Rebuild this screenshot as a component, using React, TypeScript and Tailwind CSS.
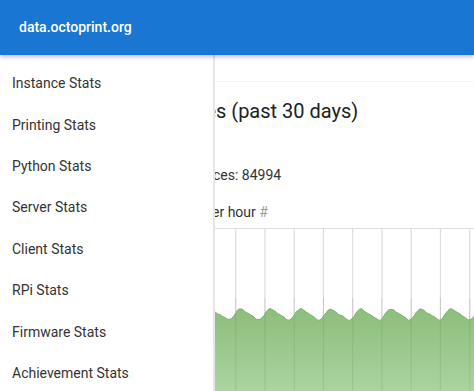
import React from "react";

const items = [
  "Instance Stats",
  "Printing Stats",
  "Python Stats",
  "Server Stats",
  "Client Stats",
  "RPi Stats",
  "Firmware Stats",
  "Achievement Stats",
];

function buildWave() {
  const pts: string[] = [];
  let seed = 7;
  const rnd = () => {
    seed = (seed * 9301 + 49297) % 233280;
    return seed / 233280;
  };
  for (let x = 0; x <= 480; x += 2) {
    const t = ((x - 242) / 30.1) * 2 * Math.PI;
    const y =
      314.5 - 5 * Math.cos(t) + 1.3 * Math.sin(2 * t) + (rnd() - 0.5) * 1.2;
    pts.push(`${x},${(y - 228).toFixed(2)}`);
  }
  return pts;
}

function Chart() {
  const pts = buildWave();
  const area = `M0,200 L${pts.join(" L")} L480,200 Z`;
  const line = `M${pts.join(" L")}`;
  const grids: number[] = [];
  for (let k = -8; k <= 9; k++) grids.push(235.7 + 29.25 * k);
  return (
    <svg width="474" height="170" className="block" viewBox="0 0 474 170">
      <defs>
        <linearGradient id="g" x1="0" y1="80" x2="0" y2="165" gradientUnits="userSpaceOnUse">
          <stop offset="0" stopColor="#8cbe7c" />
          <stop offset="1" stopColor="#acd49f" />
        </linearGradient>
      </defs>
      <line x1="0" y1="0.5" x2="474" y2="0.5" stroke="#e0e0e0" strokeWidth="1" />
      {grids.map((gx) => (
        <line key={gx} x1={gx} y1="0" x2={gx} y2="170" stroke="#dcdcdc" strokeWidth="1.2" />
      ))}
      <path d={area} fill="url(#g)" />
      {grids.map((gx) => (
        <line key={"o" + gx} x1={gx} y1="70" x2={gx} y2="170" stroke="rgba(60,110,50,0.12)" strokeWidth="1.2" />
      ))}
      <path d={line} fill="none" stroke="#80b170" strokeWidth="1" />
    </svg>
  );
}

function Line({ hidden, visible, className, w }: { hidden: string; visible: React.ReactNode; className: string; w: string }) {
  return (
    <div className={`flex whitespace-nowrap ${className}`}>
      <div className={`${w} shrink-0 flex justify-end overflow-hidden`}>{hidden}</div>
      <div>{visible}</div>
    </div>
  );
}

export default function App() {
  return (
    <div
      className="relative w-[474px] h-[391px] overflow-hidden bg-white"
      style={{ fontFamily: "Roboto, 'Noto Sans', sans-serif" }}
    >
      <header className="relative z-20 h-[55px] bg-[#1976d2] flex items-center px-[19px] shadow-[0_2px_4px_rgba(0,0,0,0.25)]">
        <span className="text-white text-[14px] font-medium">data.octoprint.org</span>
      </header>

      <main className="flex flex-col text-[#222]">
        <div className="h-[27px] border-b border-[#f3f3f3]" />
        <Line
          className="mt-[17px] h-[24px] items-center text-[20px] text-[#212121]"
          w="w-[216px]"
          hidden="Active Instance"
          visible="s (past 30 days)"
        />
        <Line
          className="mt-[44px] h-[16px] items-center text-[14px] text-[#333]"
          w="w-[213px]"
          hidden="Total instan"
          visible="ces: 84994"
        />
        <Line
          className="mt-[21px] h-[16px] items-center text-[14px] text-[#333]"
          w="w-[212px]"
          hidden="Instances p"
          visible={
            <>
              er hour <span className="text-[#9e9e9e]">#</span>
            </>
          }
        />
        <div className="mt-[8px]">
          <Chart />
        </div>
      </main>

      <nav className="absolute left-0 top-[55px] bottom-0 z-10 w-[215px] bg-white border-r-2 border-[#e6e6e6] flex flex-col pt-[8px]">
        {items.map((it) => (
          <div key={it} className="h-[41.4px] shrink-0 flex items-center px-[12px] text-[14px] text-[#333]">
            {it}
          </div>
        ))}
      </nav>
    </div>
  );
}
